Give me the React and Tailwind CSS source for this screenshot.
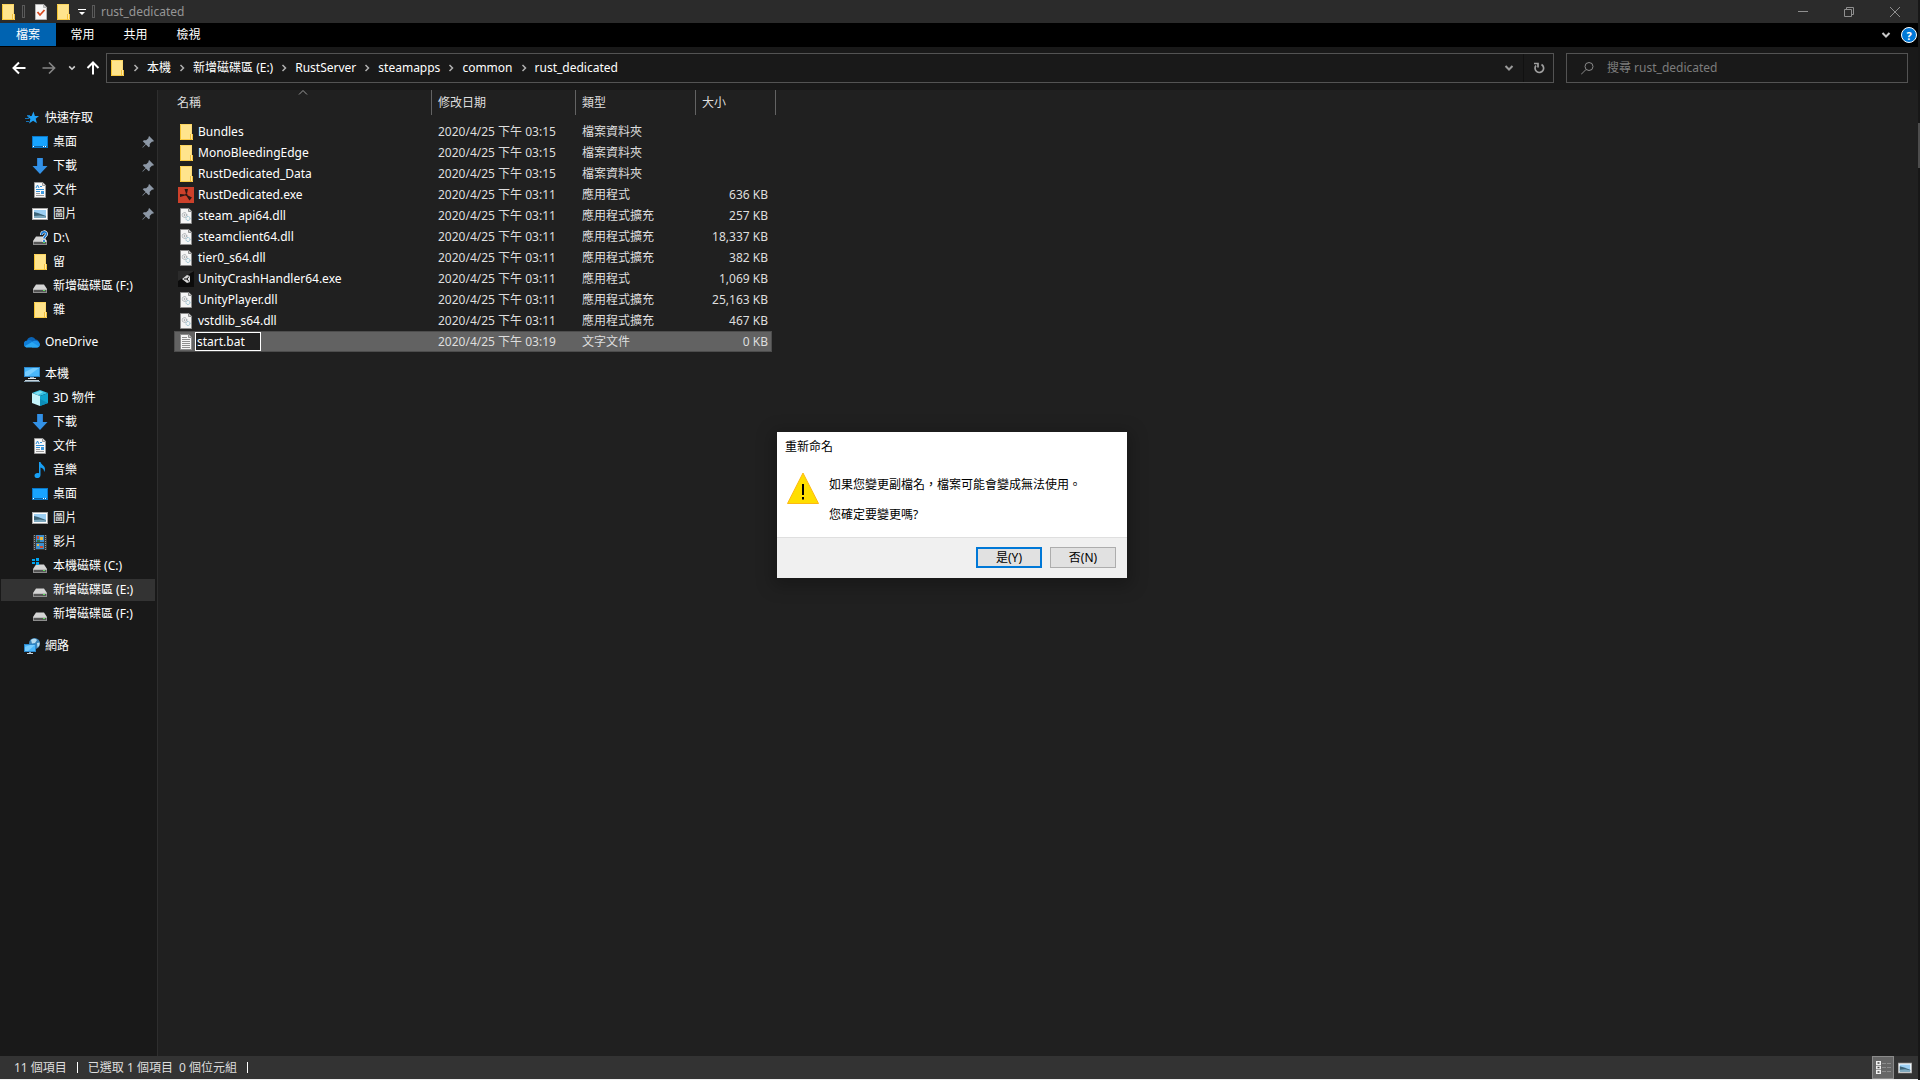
import { Fragment } from 'react'

const quickAccess = [
    { name: '桌面', icon: DesktopIcon, pinned: true },
    { name: '下載', icon: DownloadIcon, pinned: true },
    { name: '文件', icon: DocumentIcon, pinned: true },
    { name: '圖片', icon: PictureIcon, pinned: true },
    { name: 'D:\\', icon: UnknownDriveIcon },
    { name: '留', icon: FolderIcon },
    { name: '新增磁碟區 (F:)', icon: DriveIcon },
    { name: '雜', icon: FolderIcon },
]

const thisPc = [
    { name: '3D 物件', icon: CubeIcon },
    { name: '下載', icon: DownloadIcon },
    { name: '文件', icon: DocumentIcon },
    { name: '音樂', icon: MusicIcon },
    { name: '桌面', icon: DesktopIcon },
    { name: '圖片', icon: PictureIcon },
    { name: '影片', icon: VideoIcon },
    { name: '本機磁碟 (C:)', icon: SystemDriveIcon },
    { name: '新增磁碟區 (E:)', icon: DriveIcon, active: true },
    { name: '新增磁碟區 (F:)', icon: DriveIcon },
]

const files = [
    { name: 'Bundles', date: '2020/4/25 下午 03:15', type: '檔案資料夾', size: '', icon: FolderIcon },
    { name: 'MonoBleedingEdge', date: '2020/4/25 下午 03:15', type: '檔案資料夾', size: '', icon: FolderIcon },
    { name: 'RustDedicated_Data', date: '2020/4/25 下午 03:15', type: '檔案資料夾', size: '', icon: FolderIcon },
    { name: 'RustDedicated.exe', date: '2020/4/25 下午 03:11', type: '應用程式', size: '636 KB', icon: RustIcon },
    { name: 'steam_api64.dll', date: '2020/4/25 下午 03:11', type: '應用程式擴充', size: '257 KB', icon: DllIcon },
    { name: 'steamclient64.dll', date: '2020/4/25 下午 03:11', type: '應用程式擴充', size: '18,337 KB', icon: DllIcon },
    { name: 'tier0_s64.dll', date: '2020/4/25 下午 03:11', type: '應用程式擴充', size: '382 KB', icon: DllIcon },
    { name: 'UnityCrashHandler64.exe', date: '2020/4/25 下午 03:11', type: '應用程式', size: '1,069 KB', icon: UnityIcon },
    { name: 'UnityPlayer.dll', date: '2020/4/25 下午 03:11', type: '應用程式擴充', size: '25,163 KB', icon: DllIcon },
    { name: 'vstdlib_s64.dll', date: '2020/4/25 下午 03:11', type: '應用程式擴充', size: '467 KB', icon: DllIcon },
]

const crumbs = ['本機', '新增磁碟區 (E:)', 'RustServer', 'steamapps', 'common', 'rust_dedicated']

function Svg({ children, size = 16 }) {
    return (
        <svg width={size} height={size} viewBox="0 0 16 16" fill="none" className="shrink-0" aria-hidden="true">
            {children}
        </svg>
    )
}

function FolderIcon() {
    return (
        <Svg>
            <path d="M2 0h12v10h1v6H2z" fill="#ffe48c" />
            <path d="M2 0h1v16H2z" fill="#f5c430" />
            <path d="M2 0h12v1H2z" fill="#fbd560" />
            <path d="M2 15h12v1H2z" fill="#f9cb45" />
            <path d="M12 10h3v5l-1 1h-2z" fill="#f3c13a" />
            <path d="M13 10h1v5h-1z" fill="#ffe9a8" />
            <path d="M13 1h1v9h-1z" fill="#fbd873" />
        </Svg>
    )
}

function StarIcon() {
    return (
        <Svg>
            <path d="M9.5 1.5l1.400 4.400 4.100.2-3.300 2.600 1.200 4.500-3.800-2.400-4 2.800 1.300-4.600L3 6.300l4.600-.3z" fill="#1ea0f5" />
            <path d="M3 5.500h3M1 8.500h4M2 11.500h3" stroke="#1673b8" />
        </Svg>
    )
}

function DesktopIcon() {
    return (
        <Svg>
            <path d="M0 2h16v12H0z" fill="#0a78c8" />
            <path d="M1 3h14v9H1z" fill="#18a4ff" />
            <path d="M1 12h14v1H1z" fill="#0b64a8" />
            <path d="M1 12h1v1H1zM11 12h1v1h-1zM13 12h1v1h-1z" fill="#fff" />
        </Svg>
    )
}

function DownloadIcon() {
    return (
        <Svg>
            <path d="M5 0h6v8h4.500L8 16 .5 8H5z" fill="#3391e6" />
            <path d="M5 0h1v8H5zM10 0h1v8h-1z" fill="#2a7fd0" />
        </Svg>
    )
}

function DocumentIcon() {
    return (
        <Svg>
            <path d="M2.500.5h8.300l2.700 2.800v12.200h-11z" fill="#f8f8f8" stroke="#9a9a9a" />
            <path d="M10.500.5v3h3" fill="#ddd" stroke="#9a9a9a" />
            <path d="M4 6l1.500-3L7 6M8 4.500h2M4 7.500h8M4 9.500h4" stroke="#2f8fd8" />
            <path d="M9 9h3v3H9z" fill="#3d9ae0" />
            <path d="M4 11.500h4M4 13.500h8" stroke="#9a9a9a" />
        </Svg>
    )
}

function PictureIcon({ size }) {
    return (
        <Svg size={size}>
            <path d="M0 2h16v12H0z" fill="#a8a8a8" />
            <path d="M1 3h14v10H1z" fill="#fff" />
            <path d="M2 4h12v8H2z" fill="#9dd0f4" />
            <path d="M2 6l4 1 8 3v2H2z" fill="#3c6478" />
            <path d="M2 10l6-.5 6 1V12H2z" fill="#7ea9bf" />
        </Svg>
    )
}

function DriveBody() {
    return (
        <>
            <path d="M4 6.500h8l3 4.500H1z" fill="#d4d4d4" />
            <path d="M1 11h14v4H1z" fill="#8e8e8e" />
            <path d="M2 12h12v2H2z" fill="#555" />
            <path d="M1 11h14v1H1z" fill="#b8b8b8" />
            <path d="M11 12h2v1h-2z" fill="#5be05b" />
        </>
    )
}

function DriveIcon() {
    return (
        <Svg>
            <DriveBody />
        </Svg>
    )
}

function UnknownDriveIcon() {
    return (
        <Svg>
            <DriveBody />
            <path d="M9.500 5c0-4 5-4 5-1 0 2-2.500 2-2.500 4.500M12 10v2" stroke="#fff" strokeWidth="3" />
            <path d="M9.500 5c0-4 5-4 5-1 0 2-2.500 2-2.500 4.500M12 10v2" stroke="#1878d0" strokeWidth="1.700" />
        </Svg>
    )
}

function SystemDriveIcon() {
    return (
        <Svg>
            <DriveBody />
            <path d="M0 1h3v2H0zM4 0h3v3H4zM0 4h3v2H0zM4 4h3v3H4z" fill="#00a4ef" />
        </Svg>
    )
}

function CloudIcon() {
    return (
        <Svg>
            <path d="M3 8a4.500 4.500 0 0 1 8.500-2.500A4 4 0 0 1 15 9z" fill="#0a63b5" />
            <path d="M3.500 6.500c2-1 4 0 5.500 1.500L3 13.500a3.500 3.500 0 0 1 .5-7z" fill="#0f7cd6" />
            <path d="M8 8c2-2.500 8-1.500 8 2.500 0 2-1.300 3-3 3H8z" fill="#1b90e8" />
            <path d="M1 12l7-4 7 4.500c-.6.700-1.200 1-2 1H3.500c-1 0-2-.500-2.500-1.500z" fill="#2aa7f2" />
        </Svg>
    )
}

function ComputerIcon() {
    return (
        <Svg>
            <path d="M0 1h16v10H0z" fill="#2c88cc" />
            <path d="M1 2h14v8H1z" fill="#4ab7fb" />
            <path d="M1 10V6l8-4h6L4 10z" fill="#77cdff" />
            <path d="M6 11h4v1H6z" fill="#9ab" />
            <path d="M4 12h8v1H4z" fill="#dfe6ea" />
            <path d="M1 14h14v1H1z" fill="#c5d3dc" />
            <path d="M0 15h16v1H0z" fill="#7f98a8" />
        </Svg>
    )
}

function CubeIcon() {
    return (
        <Svg>
            <path d="M8 0l8 3-8 3-8-3z" fill="#37c3e6" />
            <path d="M0 3l8 3v10l-8-3z" fill="#c5f4fb" />
            <path d="M16 3L8 6v10l8-3z" fill="#10a5cf" />
            <path d="M2 3l6-2 3 1-5 3z" fill="#7fe0f2" />
            <path d="M8 16V9l8 4z" fill="#0d8db8" />
        </Svg>
    )
}

function MusicIcon() {
    return (
        <Svg>
            <path d="M7 0h1.500c.5 3 4.500 3.500 4.500 7 0 1.300-.5 2.300-1 3 .3-3-1.500-4-3.500-4.500V13c0 4-6 4-6 .7C2.500 11 5.500 10.500 7 11.300z" fill="#18a0f5" />
        </Svg>
    )
}

function VideoIcon() {
    return (
        <Svg>
            <path d="M1 1h14v15H1z" fill="#3a3a3a" />
            <path d="M2.500 1v15M13.500 1v15" stroke="#999" strokeDasharray="1 1" />
            <path d="M4 1h8v7H4z" fill="#3c8fd0" />
            <path d="M4 9h8v6H4z" fill="#3c8fd0" />
            <path d="M5 2h2v3H5zM8 12h3v2H8z" fill="#d04a2a" />
            <path d="M8 3h3v3H8zM5 10h2v2H5z" fill="#e8b840" />
            <path d="M5 6h3v2H5z" fill="#2f7040" />
        </Svg>
    )
}

function NetworkIcon() {
    return (
        <Svg>
            <circle cx="10.500" cy="5.500" r="5.500" fill="#3a83b8" />
            <path d="M7 2c2-2 5-1.500 6 0l-2 3-3 .5zM13 5l2.500-.5c.5 2-.5 4-2 5z" fill="#b5dcf0" />
            <path d="M0 6h12v8H0z" fill="#2c88cc" />
            <path d="M1 7h10v6H1z" fill="#4ab7fb" />
            <path d="M1 13V9l5-2h5l-7 6z" fill="#77cdff" />
            <path d="M5 14h2v1H5z" fill="#9ab" />
            <path d="M3 15h6v1H3z" fill="#c5d3dc" />
        </Svg>
    )
}

function RustIcon() {
    return (
        <Svg>
            <path d="M0 0h16v16H0z" fill="#cd412b" />
            <path d="M6.500 2h3.500L9 6.500H8zM2 7l5 .5v1L2 10zM9 8l5 2.500-2.500 3-3-4.500z" fill="#2a1714" />
            <circle cx="8.300" cy="7.700" r="1.200" fill="#2a1714" />
        </Svg>
    )
}

function UnityIcon() {
    return (
        <Svg>
            <path d="M0 0h16v16H0z" fill="#0b0b0b" />
            <path d="M0 0h16L0 10z" fill="#2b2b2b" />
            <path d="M4 8l5-4 3 1v6l-3 1z" fill="#d8d8d8" />
            <path d="M6 8h3l2-2.500M9 8l2 2.500" stroke="#111" />
        </Svg>
    )
}

function DllIcon() {
    return (
        <Svg>
            <path d="M2.500.5h8.300l2.700 2.800v12.200h-11z" fill="#f5f5f5" stroke="#8c8c8c" />
            <path d="M10.500.5v3h3" fill="#ccc" stroke="#8c8c8c" />
            <circle cx="6.500" cy="7" r="2.300" stroke="#8a8f94" strokeDasharray="1 .5" />
            <circle cx="6.500" cy="7" r=".8" fill="#8a8f94" />
            <circle cx="10" cy="10.500" r="2" stroke="#7fb2c6" strokeDasharray="1 .5" />
        </Svg>
    )
}

function TextFileIcon() {
    return (
        <Svg>
            <path d="M2.500.5h8.300l2.700 2.800v12.200h-11z" fill="#f5f5f5" stroke="#8c8c8c" />
            <path d="M10.500.5v3h3" fill="#ccc" stroke="#8c8c8c" />
            <path d="M4 3.500h5M4 5.500h8M4 7.500h8M4 9.500h8M4 11.500h8M4 13.500h8" stroke="#8f8f8f" />
        </Svg>
    )
}

function CheckDocIcon() {
    return (
        <Svg>
            <path d="M2.500.5h8.300l2.700 2.800v12.200h-11z" fill="#f8f8f8" stroke="#b5b5b5" />
            <path d="M10.500.5v3h3" fill="#ccc" stroke="#b5b5b5" />
            <path d="M4.500 8l2.500 3 4.500-5" stroke="#d84b20" strokeWidth="1.800" />
        </Svg>
    )
}

function PinIcon() {
    return (
        <Svg size={12}>
            <path d="M9.500 0L16 6.500l-1.500 1-1-.3-3.300 3.300.3 3-1.500 1.500-3.800-3.800L1 15.500l-.5-.5 4.300-4.200L1 7l1.500-1.500 3 .3L8.800 2.500 8.500 1.500z" fill="#8d98a6" />
        </Svg>
    )
}

function ChevronIcon({ dir = 'down', className }) {
    const d = dir === 'down' ? 'M1.500 3l3.500 3.500L8.500 3' : dir === 'up' ? 'M1 6.500l4-4 4 4' : 'M3.500 2l3 3-3 3'
    return (
        <svg width="10" height="10" viewBox="0 0 10 10" fill="none" stroke="currentColor" className={className} aria-hidden="true">
            <path d={d} />
        </svg>
    )
}

function Divider() {
    return <span className="ml-1.5 h-[13px] w-[3px] shrink-0 border border-[#5a5a5a]"></span>
}

function TitleBar() {
    return (
        <header className="flex h-[23px] shrink-0 items-center bg-[#2b2b2b]">
            <div className="flex flex-1 items-center">
                <FolderIcon />
                <Divider />
                <button className="ml-2 flex" aria-label="內容"><CheckDocIcon /></button>
                <button className="ml-1.5 flex" aria-label="新增資料夾"><FolderIcon /></button>
                <button className="ml-[7px]" aria-label="自訂快速存取工具列">
                    <svg width="8" height="8" viewBox="0 0 8 8" fill="#fff" aria-hidden="true">
                        <path d="M0 1h8v1H0zM1 4h6L4 7z" />
                    </svg>
                </button>
                <Divider />
                <h1 className="ml-1.5 text-[#969696]">rust_dedicated</h1>
            </div>
            <div className="flex h-full text-[#8f8f8f]">
                <button className="flex w-[46px] items-center justify-center" aria-label="最小化">
                    <svg width="10" height="10" viewBox="0 0 10 10" stroke="currentColor"><path d="M0 4.500h10" /></svg>
                </button>
                <button className="flex w-[46px] items-center justify-center" aria-label="還原">
                    <svg width="10" height="10" viewBox="0 0 10 10" fill="none" stroke="currentColor">
                        <path d="M.5 2.500h7v7h-7zM2.500 2.500v-2h7v7h-2" />
                    </svg>
                </button>
                <button className="flex w-[46px] items-center justify-center" aria-label="關閉">
                    <svg width="10" height="10" viewBox="0 0 10 10" stroke="currentColor"><path d="M0 0l10 10M10 0L0 10" /></svg>
                </button>
            </div>
        </header>
    )
}

function Ribbon() {
    return (
        <div className="flex h-6 shrink-0 items-center bg-black">
            <button className="h-[23px] w-14 self-start bg-[#0063b1]">檔案</button>
            <button className="w-[53px]">常用</button>
            <button className="w-[53px]">共用</button>
            <button className="w-[53px]">檢視</button>
            <button className="ml-auto mr-2.5 text-[#c8c8c8]" aria-label="展開功能區">
                <ChevronIcon className="stroke-2" />
            </button>
            <button className="mr-px flex h-4 w-4 items-center justify-center rounded-full border border-white bg-[#0078d7] text-[11px] leading-none font-bold" aria-label="說明">
                ?
            </button>
        </div>
    )
}

function AddressBar() {
    return (
        <div className="flex h-[43px] shrink-0 items-start pt-1.5 pr-2.5">
            <nav className="flex h-[30px] items-center pl-1">
                <button className="flex w-[30px] justify-center" aria-label="上一頁">
                    <Svg><path d="M14.500 8h-12M8 2.500L2.500 8 8 13.500" stroke="#fff" strokeWidth="2" /></Svg>
                </button>
                <button className="flex w-[30px] justify-center" aria-label="下一頁">
                    <Svg><path d="M1.500 8h12M8 2.500l5.500 5.500L8 13.500" stroke="#858585" strokeWidth="1.700" /></Svg>
                </button>
                <button className="flex w-4 justify-center" aria-label="最近的位置">
                    <ChevronIcon className="w-2 stroke-2 text-[#d0d0d0]" />
                </button>
                <button className="flex w-[26px] justify-center" aria-label="上移">
                    <Svg><path d="M8 14.500v-12M2.500 8L8 2.500 13.500 8" stroke="#fff" strokeWidth="2" /></Svg>
                </button>
            </nav>
            <div className="flex h-[30px] flex-1 items-center border border-[#535353] pl-0.5">
                <FolderIcon />
                {crumbs.map((crumb) => (
                    <Fragment key={crumb}>
                        <span className="flex w-[22px] justify-center text-[#b0b0b0]">
                            <ChevronIcon dir="right" className="stroke-[1.5]" />
                        </span>
                        <a href="#">{crumb}</a>
                    </Fragment>
                ))}
                <button className="ml-auto flex w-7 justify-center text-[#9a9a9a]" aria-label="先前的位置">
                    <ChevronIcon className="stroke-2" />
                </button>
                <button className="flex h-full w-[30px] items-center justify-center border-l border-[#111]" aria-label="重新整理">
                    <svg width="12" height="12" viewBox="0 0 12 12" fill="none" stroke="#a0a0a0" strokeWidth="1.700" aria-hidden="true">
                        <path d="M8.500 2.500A4.300 4.300 0 1 1 3 3.500M1 1.500h4v4" />
                    </svg>
                </button>
            </div>
            <label className="ml-3 flex h-[30px] w-[342px] items-center border border-[#535353] pl-3.5">
                <svg width="13" height="13" viewBox="0 0 13 13" fill="none" stroke="#8a8a8a" aria-hidden="true">
                    <circle cx="8" cy="4.500" r="4" />
                    <path d="M5 7.500l-5 5" />
                </svg>
                <input className="ml-[13px] flex-1 bg-transparent outline-none placeholder:text-[#7d7d7d]" placeholder="搜尋 rust_dedicated" aria-label="搜尋" />
            </label>
        </div>
    )
}

function RootItem({ icon: Icon, name }) {
    return (
        <a href="#" className="flex h-6 items-center gap-[5px] pl-6">
            <Icon />
            {name}
        </a>
    )
}

function SideItem({ item }) {
    const Icon = item.icon
    return (
        <li className="flex h-6 items-center pr-0.5 pl-px">
            <a href="#" className={`flex h-[22px] flex-1 items-center gap-[5px] pr-px pl-[31px] ${item.active ? 'bg-[#333]' : ''}`}>
                <Icon />
                <span className="flex-1 whitespace-nowrap">{item.name}</span>
                {item.pinned && <PinIcon />}
            </a>
        </li>
    )
}

function Sidebar() {
    return (
        <aside className="flex w-[158px] shrink-0 flex-col gap-2 border-r border-[#2e2e2e] bg-[#191919] pt-4">
            <div>
                <RootItem icon={StarIcon} name="快速存取" />
                <ul>
                    {quickAccess.map((item) => <SideItem key={item.name} item={item} />)}
                </ul>
            </div>
            <RootItem icon={CloudIcon} name="OneDrive" />
            <div>
                <RootItem icon={ComputerIcon} name="本機" />
                <ul>
                    {thisPc.map((item) => <SideItem key={item.name} item={item} />)}
                </ul>
            </div>
            <RootItem icon={NetworkIcon} name="網路" />
        </aside>
    )
}

function FileTable() {
    return (
        <table className="w-[602px] table-fixed border-separate border-spacing-0">
            <colgroup>
                <col className="w-[258px]" />
                <col className="w-[144px]" />
                <col className="w-[120px]" />
                <col className="w-[76px]" />
                <col className="w-1" />
            </colgroup>
            <thead>
                <tr className="h-[25px] text-left text-[#dedede]">
                    <th className="relative border-r border-[#636363] pl-[3px] font-normal">
                        名稱
                        <ChevronIcon dir="up" className="absolute -top-0.5 left-1/2 -translate-x-1/2 text-[#9a9a9a]" />
                    </th>
                    <th className="border-r border-[#636363] pl-1.5 font-normal">修改日期</th>
                    <th className="border-r border-[#636363] pl-1.5 font-normal">類型</th>
                    <th colSpan={2} className="border-r border-[#636363] pl-1.5 font-normal">大小</th>
                </tr>
                <tr className="h-1.5"></tr>
            </thead>
            <tbody className="text-[#dedede]">
                {files.map((file) => {
                    const Icon = file.icon
                    return (
                        <tr key={file.name} className="h-[21px]">
                            <td className="pl-1">
                                <div className="flex items-center gap-1 text-white">
                                    <Icon />
                                    {file.name}
                                </div>
                            </td>
                            <td className="pl-1.5">{file.date}</td>
                            <td className="pl-1.5">{file.type}</td>
                            <td className="pr-1 text-right">{file.size}</td>
                        </tr>
                    )
                })}
                <tr className="h-[21px]">
                    <td className="border-y border-l border-[#4d4d4d] bg-[#626262] pl-[3px]">
                        <div className="flex items-center gap-px">
                            <TextFileIcon />
                            <input className="h-[19px] w-[66px] border border-white bg-[#202020] px-px text-white outline-none" defaultValue="start.bat" aria-label="檔案名稱" />
                        </div>
                    </td>
                    <td className="border-y border-[#4d4d4d] bg-[#626262] pl-1.5">2020/4/25 下午 03:19</td>
                    <td className="border-y border-[#4d4d4d] bg-[#626262] pl-1.5">文字文件</td>
                    <td className="border-y border-r border-[#4d4d4d] bg-[#626262] pr-[3px] text-right">0 KB</td>
                </tr>
            </tbody>
        </table>
    )
}

function StatusBar() {
    return (
        <footer className="flex h-6 shrink-0 items-center border-b border-[#f0f0f0] bg-[#333] pl-3.5 text-[#dedede]">
            <span>11 個項目</span>
            <span className="mx-2.5 h-[11px] w-px bg-white"></span>
            <span>已選取 1 個項目</span>
            <span className="ml-1.5">0 個位元組</span>
            <span className="ml-2.5 h-[11px] w-px bg-white"></span>
            <button className="ml-auto flex h-full w-[22px] items-center justify-center border border-[#8a8a8a] bg-[#666]" aria-label="詳細資料">
                <Svg>
                    <path d="M1 1h5v13H1z" fill="#f0f0f0" />
                    <path d="M2.500 3h2M2.500 7.500h2M2.500 12h2" stroke="#444" strokeWidth="1.500" />
                    <path d="M1 5.500h5M1 9.500h5" stroke="#999" />
                    <path d="M7 3.500h4M12 3.500h4M7 7.500h4M12 7.500h4M7 11.500h4M12 11.500h4" stroke="#8c8c8c" />
                </Svg>
            </button>
            <button className="mr-1.5 ml-1 flex" aria-label="大圖示">
                <PictureIcon size={14} />
            </button>
        </footer>
    )
}

function RenameDialog() {
    return (
        <div role="alertdialog" aria-labelledby="rename-title" className="absolute top-[432px] left-[777px] w-[350px] bg-white text-black shadow-[0_4px_16px_4px_rgba(0,0,0,0.25)]">
            <h2 id="rename-title" className="px-2 py-1.5">重新命名</h2>
            <div className="flex gap-2.5 px-2.5 pt-2.5 pb-[13px]">
                <svg width="32" height="32" viewBox="0 0 32 32" aria-hidden="true">
                    <path d="M16 1l15.500 30.500H.5z" fill="#ffde00" stroke="#fdb813" />
                    <path d="M15 12h2v11h-2zM15 25h2v2.500h-2z" fill="#000" />
                </svg>
                <div className="flex flex-col gap-3 pt-1">
                    <p>如果您變更副檔名，檔案可能會變成無法使用。</p>
                    <p>您確定要變更嗎?</p>
                </div>
            </div>
            <div className="flex justify-end gap-2 border-t border-[#dfdfdf] bg-[#f0f0f0] px-[11px] pt-[9px] pb-2.5">
                <button className="h-[21px] w-[66px] border-2 border-[#0078d7] bg-[#e1e1e1] leading-none">是(Y)</button>
                <button className="h-[21px] w-[66px] border border-[#adadad] bg-[#e1e1e1] leading-none">否(N)</button>
            </div>
        </div>
    )
}

export default function App() {
    return (
        <div className="relative flex h-screen bg-[#191919] font-['Noto_Sans','Noto_Sans_CJK_TC',sans-serif] text-xs leading-[18px] text-white">
            <div className="flex min-w-0 flex-1 flex-col">
                <TitleBar />
                <Ribbon />
                <AddressBar />
                <div className="flex min-h-0 flex-1">
                    <Sidebar />
                    <main className="flex-1 bg-[#202020] pl-4">
                        <FileTable />
                    </main>
                </div>
                <StatusBar />
            </div>
            <div className="w-0.5 bg-[#171717] pt-[123px]">
                <div className="h-[45px] bg-[#4d4d4d]"></div>
            </div>
            <RenameDialog />
        </div>
    )
}
